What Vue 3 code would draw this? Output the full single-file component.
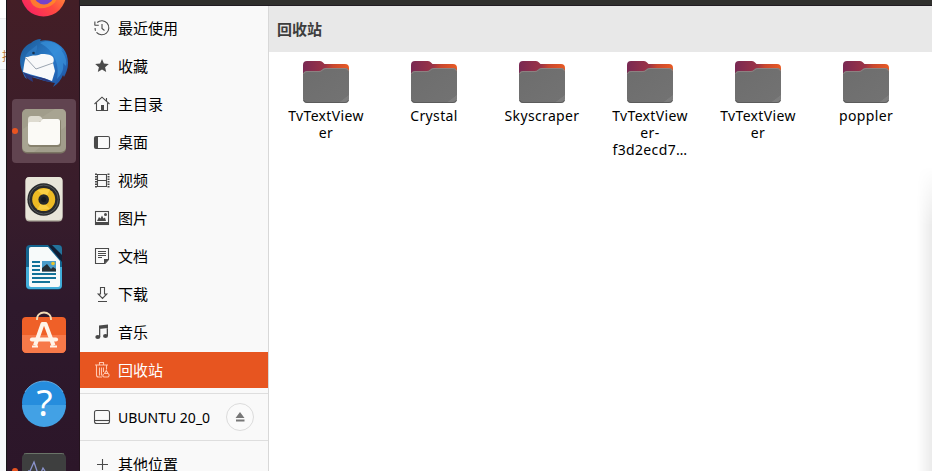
<script setup>
import { ref } from 'vue';

const places = [
  { id: 'recent', label: '最近使用' },
  { id: 'starred', label: '收藏' },
  { id: 'home', label: '主目录' },
  { id: 'desktop', label: '桌面' },
  { id: 'videos', label: '视频' },
  { id: 'pictures', label: '图片' },
  { id: 'documents', label: '文档' },
  { id: 'downloads', label: '下载' },
  { id: 'music', label: '音乐' },
  { id: 'trash', label: '回收站' },
];

const selected = ref('trash');

const folders = [
  { id: 1, name: 'TvTextView\ner' },
  { id: 2, name: 'Crystal' },
  { id: 3, name: 'Skyscraper' },
  { id: 4, name: 'TvTextView\ner-\nf3d2ecd7…' },
  { id: 5, name: 'TvTextView\ner' },
  { id: 6, name: 'poppler' },
];
</script>

<template>
  <div class="screen">
    <div class="behind">
      <div class="behind-top"></div>
      <div class="behind-row"><span>持</span></div>
    </div>

    <nav class="dock">
      <div class="app">
        <svg viewBox="0 0 64 64">
          <defs>
            <linearGradient id="fox" x1="0" y1="1" x2="1" y2="0">
              <stop offset="0" stop-color="#f5156c" />
              <stop offset=".45" stop-color="#ff4b40" />
              <stop offset="1" stop-color="#ffc52e" />
            </linearGradient>
          </defs>
          <circle cx="31.5" cy="31" r="22.5" fill="url(#fox)" />
          <path d="M18 36c2 9 10 11 18 8 5-2 8-5 9-9z" fill="#ff9a20" opacity=".65" />
          <circle cx="32" cy="31.5" r="10" fill="#7542c9" />
        </svg>
      </div>

      <div class="app">
        <svg viewBox="0 0 64 64">
          <defs>
            <linearGradient id="bird" x1="0" y1="0" x2="1" y2="1">
              <stop offset="0" stop-color="#1c5793" />
              <stop offset=".5" stop-color="#2a7dcc" />
              <stop offset="1" stop-color="#1d4d9c" />
            </linearGradient>
          </defs>
          <path d="M11 42C6 31 7 17 19 12c2-2 6-4 10-4l-1 2c3-1 7-1 11 0 11 3 17 11 17 22 0 6-2 10-4 14l-1-2c-2 5-5 9-10 12l2-4-10-2-20-6 2 4c-2-1-3-3-4-6z" fill="url(#bird)" />
          <path d="M28 12c8-4 18-1 23 8l-2-1c4 5 6 10 5 16l-3-3c1 6-1 11-6 16 3-14-3-29-17-36z" fill="#3e9be4" opacity=".55" />
          <path d="M14 26c6-3 10 0 15-3 5 0 9 0 12 3 1 2 1 4 0 6l2 8-3 10c-9-4-18-5-29-9 1-6 1-10 3-15z" fill="#f8f9fa" />
          <path d="M13 26l11 12 17-6" fill="none" stroke="#9ba5b1" />
          <path d="M13 26c2-5 6-7 12-12 1 7-3 12-12 12z" fill="#2c76bd" />
          <circle cx="21.5" cy="22" r="1.3" fill="#17324f" />
          <path d="M11 41c7 5 20 4 29 10-7 0-15-5-20-5l1 5c-4-2-8-5-10-10z" fill="#2b397c" />
        </svg>
      </div>

      <div class="app active">
        <i class="dot"></i>
        <svg viewBox="0 0 64 64">
          <rect x="10" y="10" width="44" height="44.500" rx="5" fill="#7b7563" />
          <rect x="10" y="10" width="44" height="43" rx="5" fill="#a19d8b" />
          <path d="M11 30L43 10h7q4 0 4 5v12L22 53h-7q-4 0-4-4z" fill="#b2ad9b" opacity=".45" />
          <path d="M16 20q0-3 3-3h8q2 0 3 2l1 1h15q3 0 3 3v22q0 3-3 3H19q-3 0-3-3z" fill="#79735f" opacity=".7" />
          <path d="M16 25v-5q0-3 3-3h8q2 0 3 2l2 3z" fill="#dedbd0" />
          <path d="M16 25q0-2 2-2h10l3-3h15q2 0 2 2v21q0 3-3 3H19q-3 0-3-3z" fill="#fbfaf6" />
        </svg>
      </div>

      <div class="app">
        <svg viewBox="0 0 64 64">
          <rect x="13.500" y="10" width="37" height="44.500" rx="4" fill="#b6b2a5" />
          <rect x="13.500" y="10" width="37" height="43" rx="4" fill="#e8e5d9" />
          <circle cx="31.700" cy="32.500" r="16.300" fill="#292a2c" />
          <circle cx="31.700" cy="32.500" r="14.500" fill="none" stroke="#55595b" />
          <circle cx="31.700" cy="32.500" r="11.500" fill="#edba24" />
          <path d="M25 23l13-1-4 9zM38 42l-13 1 5-9z" fill="#ffda55" opacity=".65" />
          <circle cx="31.700" cy="32.500" r="5.300" fill="#25282a" />
          <circle cx="31.700" cy="32.500" r="2.500" fill="#14191f" />
        </svg>
      </div>

      <div class="app">
        <svg viewBox="0 0 64 64">
          <rect x="14" y="10" width="36" height="44.500" rx="4" fill="#14648f" />
          <path d="M14 32h36v18q0 4-4 4H18q-4 0-4-4z" fill="#42add9" />
          <path d="M17 14q0-2 2-2h17l12 14v24q0 2-2 2H19q-2 0-2-2z" fill="#f7fafa" />
          <path d="M36 10h10q4 0 4 4v13z" fill="#121e34" />
          <path d="M40 10h6q4 0 4 4v6z" fill="#24739c" />
          <path d="M20 27h8M20 31h8M20 35h8M20 39h24M20 43h24M20 47h18" stroke="#147399" stroke-width="1.800" />
          <rect x="30" y="26" width="14" height="10.500" fill="#4b9dca" />
          <path d="M30 36.500V33l5-4 4 5 2-2 3 2v2.500z" fill="#272f34" />
          <circle cx="41" cy="28.500" r="1.800" fill="#e7c52c" />
        </svg>
      </div>

      <div class="app">
        <svg viewBox="0 0 64 64">
          <path d="M10 18q0-4 4-4h36q4 0 4 4v27q0 5-5 5H15q-5 0-5-5z" fill="#ef6028" />
          <path d="M10 32h44v13q0 5-5 5H15q-5 0-5-5z" fill="#f77949" />
          <path d="M25 17c-1-10 15-10 14 0" fill="none" stroke="#f3dbb4" stroke-width="1.800" />
          <path d="M23 42.500L30.500 21h3l8 21.500" fill="none" stroke="#fff4e9" stroke-width="4" stroke-linejoin="round" />
          <path d="M20 36.500h24" stroke="#fff4e9" stroke-width="4.200" stroke-linecap="round" />
          <path d="M20 43.500h6M38 43.500h7" stroke="#fff4e9" stroke-width="2" />
        </svg>
      </div>

      <div class="app">
        <svg viewBox="0 0 64 64">
          <circle cx="32" cy="32" r="22" fill="#268ddd" />
          <path d="M10 34h44a22 22 0 0 1-44 0z" fill="#42a1e5" />
          <path d="M13 21a22 22 0 0 1 38 0" fill="none" stroke="#75bcf0" stroke-width=".8" />
          <text class="help-mark" x="32.500" y="45" text-anchor="middle">?</text>
        </svg>
      </div>

      <div class="app">
        <i class="dot"></i>
        <svg viewBox="0 0 64 64">
          <rect x="10" y="14" width="44" height="44" rx="5" fill="#3e3f3f" />
          <path d="M12 15q1-.5 3-.5h34q2 0 3 .5" fill="none" stroke="#6a7468" />
          <path d="M16 32h2l4-9 5 15 4-9 2 3" fill="none" stroke="#8b94ce" stroke-width="1.300" />
        </svg>
      </div>
    </nav>

    <div class="window">
      <div class="titlebar"></div>
      <div class="body">
        <aside class="sidebar">
          <div
              v-for="place in places"
              :key="place.id"
              :class="['place', { selected: selected === place.id }]"
              @click="selected = place.id"
          >
            <svg class="glyph" viewBox="0 0 16 16">
              <g v-if="place.id === 'recent'" class="line">
                <path d="M3.200 2.500A7 7 0 1 1 2.500 12.300M1.500 10.700A7 7 0 0 1 1.100 8" />
                <path d="M.8 5.500l.1-4M.8 5.300h4M8 4v4.500l2.500 2" />
              </g>
              <path v-else-if="place.id === 'starred'" class="solid" d="M8 1l1.900 4.600 4.900.4-3.700 3.200 1.100 4.800L8 11.400 3.800 14l1.100-4.800L1.200 6l4.900-.4z" />
              <g v-else-if="place.id === 'home'">
                <path class="line" d="M.5 8L8 1.200 15.500 8M2.500 7v7.500h11V7M12.500 2v3" />
                <path class="solid" d="M7 9h3v6H7z" />
              </g>
              <g v-else-if="place.id === 'desktop'">
                <rect class="line" x=".5" y="2.500" width="15" height="12" rx="1.500" />
                <path class="solid" d="M1 3h3v11H1z" />
              </g>
              <g v-else-if="place.id === 'videos'">
                <path class="line" d="M3.500 2v13M12.500 2v13M3 2.500h10M3 8.500h10M3 14.500h10" />
                <path class="film" d="M2 1.500v14M14.500 1.500v14" />
              </g>
              <g v-else-if="place.id === 'pictures'">
                <rect class="line" x="1.500" y="1.500" width="13" height="13" />
                <path class="solid" d="M1 12h14v3H1zM3 11l2-4 1.500 1.500L8 5.500l1.500 3L11 7.500l1 3.500z" />
                <circle class="solid" cx="11.500" cy="4.500" r="1.500" />
              </g>
              <g v-else-if="place.id === 'documents'">
                <path class="line" d="M1.500.5h13v11l-3.500 4H1.500zM4 3.500h8M4 5.500h8M4 7.500h8M4 9.500h4" />
                <path class="solid" d="M10 11h5l-5 5z" />
              </g>
              <path v-else-if="place.id === 'downloads'" class="line" d="M6.500 1.500h4v6.500h2.300l-4.300 4.500L4.200 8h2.300zM4 15.500h9" />
              <g v-else-if="place.id === 'music'">
                <path class="solid" d="M5 1.500L14 .5V4l-9 1zM5 2h1.300v11H5zM12.700 2H14v10h-1.300z" />
                <ellipse class="solid" cx="3.800" cy="13" rx="2.500" ry="2" />
                <ellipse class="solid" cx="11.500" cy="12" rx="2.500" ry="2" />
              </g>
              <g v-else class="line">
                <path d="M1 3h13M5.500 2.500V.5h4v2M2.500 3.500v9.500q0 2 2 2H8M12.500 3.500v4M5.500 5.500v8M7.500 5.500v8M9.500 5.500V10" />
                <path d="M12.300 8.500l1.700 3h-3.400zM9.500 12q-1.800 3 1 3h3.500q2-1.500 .5-3" />
              </g>
            </svg>
            <span>{{ place.label }}</span>
          </div>

          <div class="device">
            <svg class="glyph" viewBox="0 0 16 16">
              <g class="line">
                <rect x=".5" y="1.500" width="15" height="13" rx="2" />
                <path d="M1 11.500h14" />
              </g>
            </svg>
            <span class="device-name">UBUNTU 20_0</span>
            <button class="eject">
              <svg viewBox="0 0 10 10"><path d="M5 0l4.500 6h-9zM1 7.500h8.500v2H1z" fill="#777" /></svg>
            </button>
          </div>

          <div class="place other">
            <svg class="glyph" viewBox="0 0 16 16">
              <path class="line" d="M8.500 3v11M3 8.500h11" />
            </svg>
            <span>其他位置</span>
          </div>
        </aside>

        <main class="content">
          <header class="location">回收站</header>
          <div class="grid">
            <div v-for="folder in folders" :key="folder.id" class="folder">
              <svg width="46" height="42" viewBox="0 0 46 42">
                <defs>
                  <linearGradient id="folder-back" x1="0" x2="1">
                    <stop offset="0" stop-color="#792953" />
                    <stop offset=".48" stop-color="#9b3346" />
                    <stop offset=".65" stop-color="#c8472f" />
                    <stop offset="1" stop-color="#e95b24" />
                  </linearGradient>
                  <linearGradient id="folder-front" x1="0" x2="1" y2="1">
                    <stop offset="0" stop-color="#6d6d6d" />
                    <stop offset=".88" stop-color="#727272" />
                    <stop offset=".89" stop-color="#7d7d7d" />
                  </linearGradient>
                </defs>
                <path d="M0 4q0-4 4-4h13q2 0 3 1.500L21.500 3H42q4 0 4 4v10H0z" fill="url(#folder-back)" />
                <path d="M0 14q0-4 4-4h12q2 0 3-1.500Q20 7 22 7h20q4 0 4 4v27q0 4-4 4H4q-4 0-4-4z" fill="url(#folder-front)" />
                <path d="M.5 13q.5-2.500 3.500-2.500h12q2 0 3.500-1.500T23 7.500h19q3 0 3.500 2.500" fill="none" stroke="#9a8b89" stroke-width=".7" />
                <path d="M.5 39q1 2.500 3.500 2.500h38q3 0 3.500-2.500" fill="none" stroke="#555" stroke-width=".8" />
              </svg>
              <div class="name">{{ folder.name }}</div>
            </div>
          </div>
          <div class="edge-shadow"></div>
        </main>
      </div>
    </div>
  </div>
</template>

<style>
body {
  margin: 0;
  overflow: hidden;
}
</style>

<style scoped>
.screen {
  display: flex;
  width: 932px;
  height: 471px;
  overflow: hidden;
  box-sizing: border-box;
  font-family: "Noto Sans", "Noto Sans CJK SC", sans-serif;
  font-size: 15px;
  color: #000;
}

.behind {
  flex: none;
  width: 6px;
  background: #f6f8fa;
  overflow: hidden;
}

.behind-top {
  height: 18px;
  background: #fff;
  border-bottom: 1px solid #eceeef;
}

.behind-row {
  display: flex;
  align-items: center;
  height: 51px;
  padding: 24px 0 0 2px;
  box-sizing: border-box;
  border-bottom: 1px solid #e1e5e8;
  color: #b7793b;
  font-size: 12px;
}

.dock {
  display: flex;
  flex: none;
  flex-direction: column;
  width: 74px;
  gap: 4px;
  padding-left: 5px;
  box-sizing: border-box;
  border-left: 1px solid #171519;
  border-right: 1px solid #24131e;
  background: linear-gradient(#431e26, #391d2b 40%, #2e192c 65%, #2c1629);
  overflow: hidden;
}

.app {
  display: flex;
  flex: none;
  position: relative;
  width: 64px;
  height: 64px;
  border-radius: 4px;
}

.app:first-child {
  margin-top: -37px;
}

.app svg {
  width: 64px;
  height: 64px;
}

.app.active {
  background: #614450;
}

.dot {
  position: absolute;
  left: 0;
  top: 29px;
  width: 6px;
  height: 6px;
  border-radius: 50%;
  background: #e95420;
}

.help-mark {
  fill: #fff;
  font-family: "Noto Sans", sans-serif;
  font-size: 37px;
}

.window {
  display: flex;
  flex-direction: column;
  flex: 1;
  min-width: 0;
}

.titlebar {
  flex: none;
  height: 6px;
  box-sizing: border-box;
  background: #30302d;
  border-bottom: 1px solid #211c22;
}

.body {
  display: flex;
  flex: 1;
  min-height: 0;
}

.sidebar {
  width: 189px;
  box-sizing: border-box;
  padding-top: 3px;
  border-right: 1px solid #d8d8d8;
  background: #f9f9f9;
  overflow: hidden;
}

.place {
  display: flex;
  align-items: center;
  gap: 8px;
  height: 36px;
  margin: 1px 0 2px;
  padding-left: 14px;
  line-height: 22px;
}

.place + .place {
  margin-top: 0;
}

.glyph {
  flex: none;
  width: 16px;
  height: 16px;
  overflow: visible;
  color: #4a4a4a;
}

.line {
  fill: none;
  stroke: currentColor;
  stroke-width: 1.1;
}

.solid {
  fill: currentColor;
}

.film {
  fill: none;
  stroke: currentColor;
  stroke-width: 2;
  stroke-dasharray: 1.5 1;
}

.selected {
  color: #fff;
  background: #e75520;
}

.selected .glyph {
  color: #ffc7b0;
}

.device {
  display: flex;
  align-items: center;
  gap: 8px;
  height: 46px;
  padding: 0 14px;
  border-top: 1px solid #dedede;
  border-bottom: 1px solid #dedede;
}

.place + .device {
  margin-top: 5px;
}

.device-name {
  width: 100px;
  font-size: 14px;
  white-space: nowrap;
}

.eject {
  display: flex;
  align-items: center;
  justify-content: center;
  flex: none;
  width: 28px;
  height: 28px;
  padding: 0;
  border: 1px solid #dcdcdc;
  border-radius: 50%;
  background: #fafafa;
}

.eject svg {
  width: 10px;
  height: 10px;
}

.other {
  margin-top: 5px;
}

.content {
  flex: 1;
  position: relative;
  background: #fff;
}

.location {
  height: 46px;
  padding-left: 8px;
  line-height: 47px;
  font-weight: bold;
  color: #3d3d3d;
  background: #e8e8e8;
}

.grid {
  display: grid;
  grid-template-columns: repeat(6, 108px);
  padding: 9px 0 0 3px;
}

.folder {
  display: flex;
  flex-direction: column;
  align-items: center;
}

.name {
  margin-top: 4px;
  font-size: 14px;
  line-height: 17px;
  letter-spacing: 0.35px;
  text-align: center;
  white-space: pre;
}

/* soft shadow cast by the neighbouring window */
.edge-shadow {
  position: absolute;
  right: 0;
  top: 160px;
  bottom: 0;
  width: 15px;
  background: linear-gradient(to right, transparent, rgba(0, 0, 0, 0.08));
  mask-image: linear-gradient(transparent, #000 60px);
}
</style>
